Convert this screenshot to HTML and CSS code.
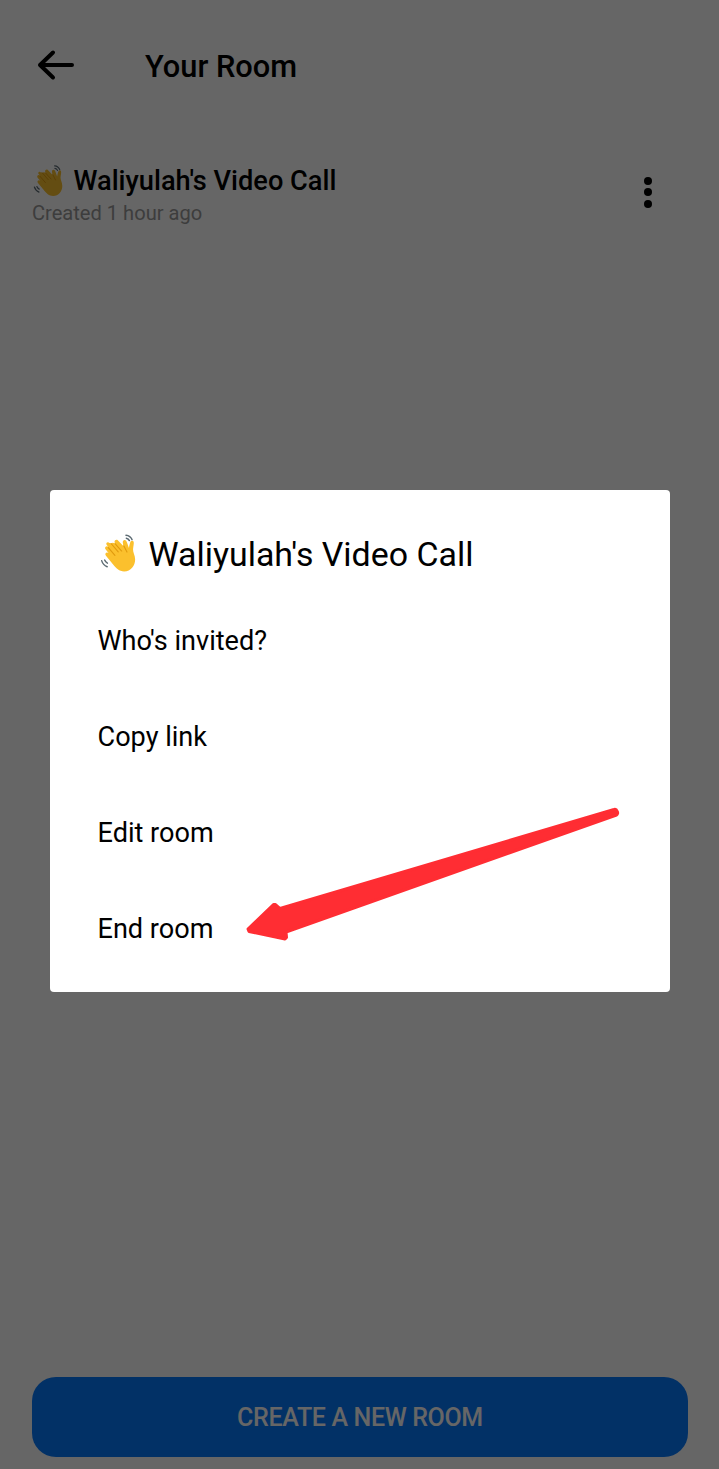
FILE: index.html
```html
<!DOCTYPE html>
<html>
  <head>
    <title>Your Room</title>
    <meta name="viewport" content="width=device-width, initial-scale=1">
    <link rel="stylesheet" href="styles.css">
  </head>

  <body>
    <svg class="defs" width="0" height="0">
      <symbol id="wave" viewBox="0 0 38 38">
        <path fill="#fbc02d" d="M10 9.500c1-1 2.600-.8 3.600.2l-.4-1.400c-.5-1.600 1.500-3 2.900-1.800l5 5.200-.5-3.200c-.2-1.500 1.100-2.500 2.300-2 .9.300 1.200 1 1.700 2.500l1.600 4.500c.3-2 .9-4.800 1.600-6 .7-1 2.400-.7 2.700.6.3 1.500-.4 4.200-.6 6.500-.2 2.600 1.900 5.500 1.900 9.300 0 5.500-4 10.900-9.900 10.900-4.700 0-7.300-2.900-10.200-6.500l-6.300-7.700c-1.600-1.900.8-3.900 2.500-2.300l-2.900-3.500c-1.400-1.800 1-3.800 2.600-2.200l-1.500-1.700c-1.300-1.600.8-3.200 1.900-2z"/>
        <path fill="none" stroke="#e09a0e" stroke-width="1" stroke-linecap="round" d="M13.600 9.700l6 6.600M10 9.500l6.500 7.500M7.500 13.200l6 7M21.600 11.700l2.800 5.600"/>
        <path fill="none" stroke="#5c6b73" stroke-width="1.300" stroke-linecap="round" d="M23.500 2c2.500.2 4.500 1.600 5.500 4M23.800 4.700c1.300.2 2.300 1 2.800 2.200M1.500 25c.8 2.600 2.500 4.500 5 5.500M4.200 24.500c.5 1.300 1.300 2.200 2.500 2.800"/>
      </symbol>
    </svg>

    <div class="screen">
      <div class="topbar">
        <svg class="back" width="40" height="40" viewBox="0 0 40 40">
          <path d="M36 20H4M17 7.500L4 20l13 12.500" fill="none" stroke="#000" stroke-width="4" stroke-linecap="round" stroke-linejoin="round"/>
        </svg>
        <h1 class="page-title">Your Room</h1>
      </div>

      <div class="room">
        <div>
          <div class="room-name"><svg class="wave-small"><use href="#wave"/></svg>Waliyulah's Video Call</div>
          <div class="room-time">Created 1 hour ago</div>
        </div>
        <div class="dots"><span></span><span></span><span></span></div>
      </div>

      <div class="spacer"></div>
      <button class="create">CREATE A NEW ROOM</button>
    </div>

    <div class="overlay">
      <div class="modal">
        <div class="modal-title"><svg class="wave-big"><use href="#wave"/></svg>Waliyulah's Video Call</div>
        <div class="modal-item">Who's invited?</div>
        <div class="modal-item">Copy link</div>
        <div class="modal-item">Edit room</div>
        <div class="modal-item">End room</div>
      </div>
    </div>

    <!-- red arrow drawn on top of the screenshot -->
    <svg class="arrow" width="719" height="1469" viewBox="0 0 719 1469">
      <path fill="#ff2d33" stroke="#ff2d33" stroke-width="3" stroke-linejoin="round" d="M614 809.500c3-1 5 4.500 2.500 5.500L286 932l.500 5.500-1.500 1.500-36-7.500-1-2.500 25.500-24.500 2 0 4.500 4z"/>
    </svg>
  </body>
</html>
```

FILE: styles.css
```css
html, body { margin: 0; padding: 0; height: 100%; }
body { font-family: Roboto, "Noto Sans", sans-serif; background-color: #fff; color: #000; overflow: hidden; }
.defs { display: block; }

.screen { display: flex; flex-direction: column; height: 1469px; box-sizing: border-box; padding: 0 31px 12px 32px; }

.topbar { display: flex; align-items: center; height: 132px; }
.back { margin-left: 4px; margin-top: -2px; }
.page-title { margin: 0 0 0 69px; font-size: 30.8px; font-weight: 500; }

.room { display: flex; justify-content: space-between; align-items: center; margin-top: 31px; }
.room-name { display: flex; align-items: center; font-size: 27.2px; font-weight: 500; line-height: 36px; }
.wave-small { width: 35px; height: 35px; margin: 0 5.500px 0 1px; }
.room-time { font-size: 20.1px; line-height: 28px; color: #999; }
.dots { display: flex; flex-direction: column; gap: 3.500px; margin-right: 36px; margin-bottom: 6px; }
.dots span { width: 8px; height: 8px; background-color: #000; border-radius: 50%; }

.spacer { flex: 1; }
.create { height: 80px; border: none; border-radius: 24px; background-color: #077aff; color: #fff; font-family: Roboto, sans-serif; font-size: 25px; font-weight: 500; letter-spacing: -0.35px; }

.overlay { position: fixed; top: 0; left: 0; right: 0; bottom: 0; display: flex; justify-content: center; align-items: flex-start; padding-top: 490px; background-color: rgba(0, 0, 0, 0.6); }
.modal { width: 620px; height: 502px; box-sizing: border-box; padding: 40px 48px 0 48px; background-color: #fff; border-radius: 4px; }
.modal-title { display: flex; align-items: center; height: 48px; margin-bottom: 25px; font-size: 33.9px; }
.wave-big { width: 42px; height: 42px; margin: 0 7px 0 2px; }
.modal-item { height: 96px; line-height: 76px; font-size: 27.1px; }

.arrow { position: fixed; top: 0; left: 0; pointer-events: none; }
```
